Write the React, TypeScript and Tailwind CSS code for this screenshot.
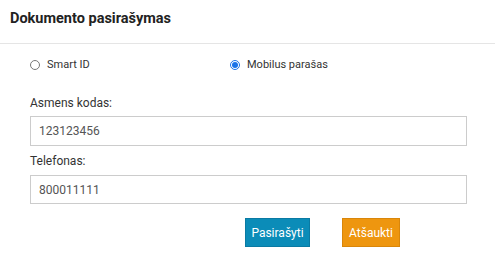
import React from "react";

export default function App() {
  return (
    <div className="w-[495px] h-[276px] bg-white text-[#333] font-['Roboto',sans-serif]">
      <div className="h-[44px] border-b border-[#e5e5e5] flex items-center pl-[10px] pb-[6px]">
        <h1 className="text-[14.5px] font-bold text-[#222]">Dokumento pasirašymas</h1>
      </div>
      <div className="pl-[30px] pr-[28px]">
        <div className="grid grid-cols-[200px_200px] h-[44px] items-center pb-[2px]">
          <label className="flex items-center gap-[7px] text-[11px] text-[#333]">
            <span className="w-[10px] h-[10px] rounded-full border border-[#777] bg-white" />
            Smart ID
          </label>
          <label className="flex items-center gap-[7px] text-[11px] text-[#333]">
            <span className="w-[10px] h-[10px] rounded-full border border-[#1a73e8] bg-white flex items-center justify-center">
              <span className="w-[6px] h-[6px] rounded-full bg-[#1a73e8]" />
            </span>
            Mobilus parašas
          </label>
        </div>
        <div className="flex flex-col">
          <div className="text-[12px] h-[28px] flex items-center pt-[1px]">Asmens kodas:</div>
          <input
            readOnly
            value="123123456"
            className="h-[30px] w-[437px] border border-[#ccc] px-[8px] text-[12px] text-[#555] outline-none"
          />
          <div className="text-[12px] h-[29px] flex items-center">Telefonas:</div>
          <input
            readOnly
            value="800011111"
            className="h-[29px] w-[437px] border border-[#ccc] px-[8px] text-[12px] text-[#555] outline-none"
          />
        </div>
      </div>
      <div className="flex pl-[245px] gap-[32px] mt-[14px]">
        <button className="h-[29px] w-[65px] bg-[#0b8cb8] border border-[#0a7aa3] text-white text-[12px]">
          Pasirašyti
        </button>
        <button className="h-[29px] w-[58px] bg-[#ee960f] border border-[#d9860a] text-white text-[12px]">
          Atšaukti
        </button>
      </div>
    </div>
  );
}
